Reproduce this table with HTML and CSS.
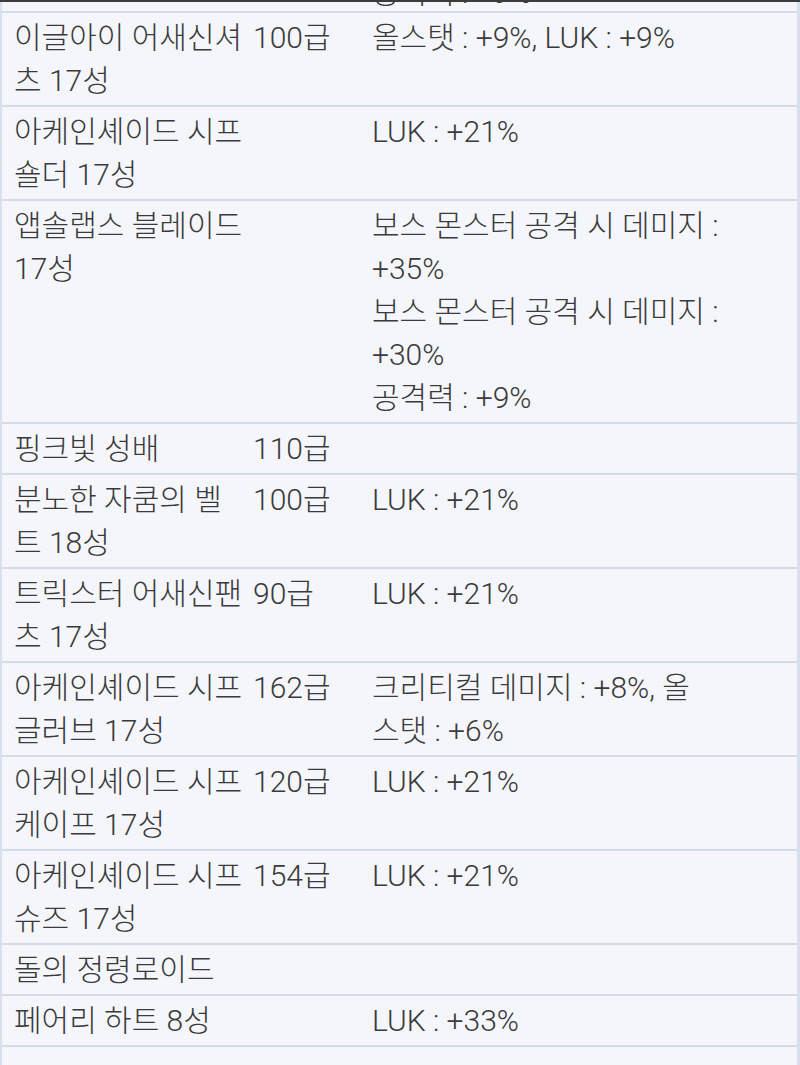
FILE: index.html
```html
<!DOCTYPE html>
<html lang="ko">
<head>
<meta charset="utf-8">
<title>장비 목록</title>
<link rel="stylesheet" href="styles.css">
</head>
<body>
<div class="sheet">
  <div class="table">
    <div class="row cut">
      <div class="c1"></div><div class="c2"></div>
      <div class="c3">공격력 : +9%</div>
    </div>
    <div class="row">
      <div class="c1">이글아이 어새신셔츠 17성</div>
      <div class="c2">100급</div>
      <div class="c3">올스탯 : +9%, LUK : +9%</div>
    </div>
    <div class="row">
      <div class="c1">아케인셰이드 시프 숄더 17성</div>
      <div class="c2"></div>
      <div class="c3">LUK : +21%</div>
    </div>
    <div class="row">
      <div class="c1">앱솔랩스 블레이드 17성</div>
      <div class="c2"></div>
      <div class="c3">
        <div>보스 몬스터 공격 시 데미지 : +35%</div>
        <div>보스 몬스터 공격 시 데미지 : +30%</div>
        <div>공격력 : +9%</div>
      </div>
    </div>
    <div class="row">
      <div class="c1">핑크빛 성배</div>
      <div class="c2">110급</div>
      <div class="c3"></div>
    </div>
    <div class="row">
      <div class="c1">분노한 자쿰의 벨트 18성</div>
      <div class="c2">100급</div>
      <div class="c3">LUK : +21%</div>
    </div>
    <div class="row">
      <div class="c1">트릭스터 어새신팬츠 17성</div>
      <div class="c2">90급</div>
      <div class="c3">LUK : +21%</div>
    </div>
    <div class="row">
      <div class="c1">아케인셰이드 시프 글러브 17성</div>
      <div class="c2">162급</div>
      <div class="c3">크리티컬 데미지 : +8%, 올<span class="keep">스탯</span> : +6%</div>
    </div>
    <div class="row">
      <div class="c1">아케인셰이드 시프 케이프 17성</div>
      <div class="c2">120급</div>
      <div class="c3">LUK : +21%</div>
    </div>
    <div class="row">
      <div class="c1">아케인셰이드 시프 슈즈 17성</div>
      <div class="c2">154급</div>
      <div class="c3">LUK : +21%</div>
    </div>
    <div class="row">
      <div class="c1">돌의 정령로이드</div>
      <div class="c2"></div>
      <div class="c3"></div>
    </div>
    <div class="row">
      <div class="c1">페어리 하트 8성</div>
      <div class="c2"></div>
      <div class="c3">LUK : +33%</div>
    </div>
    <div class="row">
      <div class="c1">&nbsp;</div>
      <div class="c2"></div>
      <div class="c3"></div>
    </div>
  </div>
</div>
</body>
</html>
```
FILE: styles.css
```css
html, body {
  margin: 0;
  padding: 0;
  height: 100%;
}

body {
  background: #f4f6fb;
  color: #3a3a3a;
  font-family: "Roboto", "Noto Sans CJK KR", sans-serif;
  font-size: 30px;
  font-weight: 300;
  overflow: hidden;
}

.sheet {
  height: 100vh;
  box-sizing: border-box;
  border-top: 2px solid #3c3c3c;
  overflow: hidden;
}

.table {
  border-left: 2px solid #d9dfeb;
  border-right: 3px solid #d9dfeb;
}

.row {
  display: grid;
  grid-template-columns: 239px 119px 358px;
  padding: 3px 0 3px 12px;
  line-height: 43px;
  border-bottom: 2px solid #d5dbe7;
}

.row.cut {
  margin-top: -30px;
  line-height: 36px;
  padding-bottom: 0;
}

.c1 {
  padding-right: 8px;
}

.keep {
  white-space: nowrap;
}
```
